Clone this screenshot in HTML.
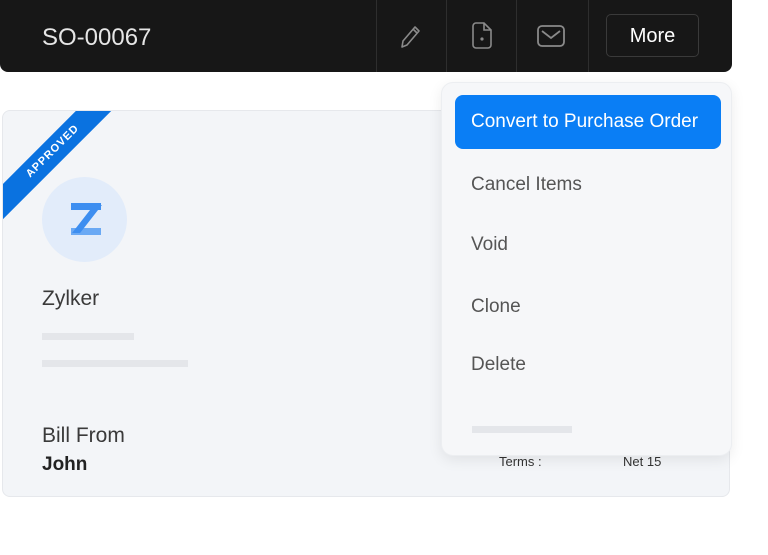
<!DOCTYPE html>
<html><head><style>
*{margin:0;padding:0;box-sizing:border-box}
body{width:768px;height:555px;background:#fff;position:relative;overflow:hidden;font-family:"Liberation Sans",sans-serif}
.bar{position:absolute;left:0;top:0;width:732px;height:72px;background:#171717;border-radius:0 0 8px 8px}
.id{position:absolute;left:42px;top:24px;color:#e6e6e6;font-size:24px}
.div{position:absolute;top:0;width:1px;height:72px;background:#2e2e2e}
.more{position:absolute;left:606px;top:14px;width:93px;height:43px;border:1px solid #3a3a3a;border-radius:5px;color:#fff;font-size:20px;text-align:center;line-height:43px}
.card{position:absolute;left:2px;top:110px;width:728px;height:387px;background:#f3f5f8;border-radius:8px;border:1px solid #e6e8ec;overflow:hidden}
.dd{position:absolute;left:441px;top:82px;width:291px;height:374px;background:#f6f7f9;border-radius:12px;box-shadow:0 4px 14px rgba(0,0,0,.08);border:1px solid #eceef1}
.btn{position:absolute;left:13px;top:12px;width:266px;height:54px;background:#0a7ef5;border-radius:8px;color:#fff;font-size:19px;line-height:54px;padding-left:16px}
.it{position:absolute;left:29px;color:#555;font-size:19px}
.g{position:absolute;background:#e4e6ea;height:7px}
</style></head><body>
<div class="bar">
<div class="id">SO-00067</div>
<div class="div" style="left:376px"></div><div class="div" style="left:446px"></div><div class="div" style="left:516px"></div><div class="div" style="left:588px"></div>
<svg style="position:absolute;left:398px;top:23px" width="26" height="26" viewBox="0 0 26 26" fill="none" stroke="#8a8a8a" stroke-width="1.6" stroke-linejoin="round"><path d="M4 24l1-6L17 4l4 4L9 22z M15 6l4 4"/></svg>
<svg style="position:absolute;left:469px;top:21px" width="26" height="30" viewBox="0 0 26 30" fill="none" stroke="#8a8a8a" stroke-width="1.6"><path d="M4 5a3 3 0 0 1 3-3h8l7 7v15a3 3 0 0 1-3 3H7a3 3 0 0 1-3-3z M15 2v7h7"/><circle cx="13" cy="18" r=".8" fill="#8a8a8a"/></svg>
<svg style="position:absolute;left:536px;top:24px" width="30" height="24" viewBox="0 0 30 24" fill="none" stroke="#8a8a8a" stroke-width="1.8"><rect x="2" y="2" width="26" height="20" rx="4"/><path d="M6 7l9 7 9-7"/></svg>
<div class="more">More</div>
</div>
<div class="card">
<div style="position:absolute;left:-45px;top:28px;width:190px;height:25px;background:#0a72e0;transform:rotate(-45deg);color:#fff;font-size:11px;font-weight:bold;letter-spacing:1px;text-align:center;line-height:25px">APPROVED</div>
<div style="position:absolute;left:39px;top:66px;width:85px;height:85px;border-radius:50%;background:#e2ecfa"></div>
<div style="position:absolute;left:68px;top:92px;width:30px;height:7px;background:#3d8ef0"></div>
<div style="position:absolute;left:68px;top:117px;width:30px;height:7px;background:#6aa9f4"></div>
<div style="position:absolute;top:94px;width:8px;height:28px;background:#3d8ef0;transform:skewX(-38deg);left:80px"></div>
<div style="position:absolute;left:39px;top:176px;font-size:21px;color:#3a3a3a">Zylker</div>
<div class="g" style="left:39px;top:222px;width:92px"></div>
<div class="g" style="left:39px;top:249px;width:146px"></div>
<div style="position:absolute;left:39px;top:313px;font-size:21px;color:#3a3a3a">Bill From</div>
<div style="position:absolute;left:39px;top:343px;font-size:19px;color:#222;font-weight:bold">John</div>
<div style="position:absolute;left:496px;top:343px;font-size:13px;color:#333">Terms :</div>
<div style="position:absolute;left:620px;top:343px;font-size:13px;color:#333">Net 15</div>
</div>
<div class="dd">
<div class="btn">Convert to Purchase Order</div>
<div class="it" style="top:91px">Cancel Items</div>
<div class="it" style="top:151px">Void</div>
<div class="it" style="top:213px">Clone</div>
<div class="it" style="top:271px">Delete</div>
<div class="g" style="left:30px;top:343px;width:100px"></div>
</div>
</body></html>
